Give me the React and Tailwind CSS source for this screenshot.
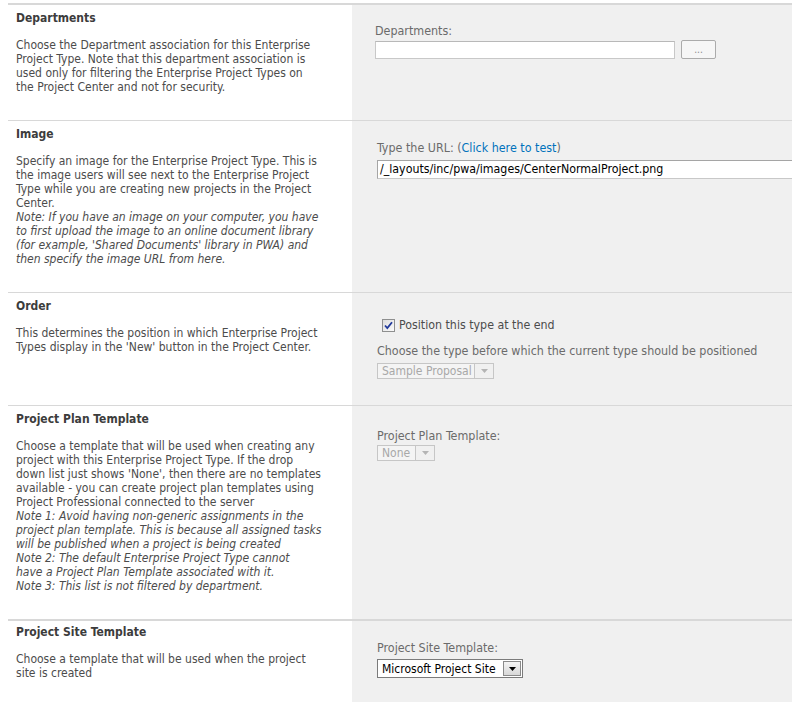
import React from 'react';

const font = { fontFamily: '"DejaVu Sans Condensed", "DejaVu Sans", Verdana, sans-serif' };

function Row({ title, lines, notes = [], controls, leftPad = 'pt-[6px]', rightPad = 'pt-[20px]', thick = false }) {
  return (
    <div className={`flex ${thick ? 'border-t-2' : 'border-t'} border-[#d8d8d8]`}>
      <div className={`w-[344px] shrink-0 pl-[8px] pb-[26px] ${leftPad}`}>
        <div className="text-[12px] leading-[14px] font-bold text-[#3c3c3c] font-stretch-condensed">{title}</div>
        <div className="mt-[13px] whitespace-nowrap text-[12px] leading-[14px] text-[#4c4c4c] font-stretch-condensed">
          {lines.map((l) => (
            <div key={l}>{l}</div>
          ))}
          {notes.map((l) => (
            <div key={l} className="italic">
              {l}
            </div>
          ))}
        </div>
      </div>
      <div className={`flex-1 bg-[#f0f0f0] pl-[25px] pb-[26px] ${rightPad}`}>{controls}</div>
    </div>
  );
}

function Label({ children }) {
  return <div className="text-[12.4px] leading-[14px] text-[#6b6b6b] font-stretch-condensed whitespace-nowrap">{children}</div>;
}

function DisabledSelect({ value, width }) {
  return (
    <div className={`flex h-[16px] border border-[#c6c6c6] bg-[#f4f4f4] ${width}`}>
      <span className="flex-1 pl-[4px] text-[12px] leading-[14px] text-[#a8a8a8] font-stretch-condensed whitespace-nowrap">{value}</span>
      <span className="flex w-[19px] items-center justify-center border-l border-[#c6c6c6] bg-[#f0f0f0]">
        <svg width="7" height="4" viewBox="0 0 7 4">
          <path d="M0 0h7L3.5 4z" fill="#b4b4b4" />
        </svg>
      </span>
    </div>
  );
}

export default function App() {
  return (
    <div className="h-[702px] w-[792px] overflow-hidden bg-white pt-[3px]" style={font}>
      <div className="ml-[8px] border-t border-[#d8d8d8]">
        <Row
          title="Departments"
          rightPad="pt-[19px] !pl-[23px]"
          lines={[
            'Choose the Department association for this Enterprise',
            'Project Type. Note that this department association is',
            'used only for filtering the Enterprise Project Types on',
            'the Project Center and not for security.',
          ]}
          controls={
            <>
              <Label>Departments:</Label>
              <div className="mt-[2px] flex items-center gap-[6px]">
                <div className="h-[18px] w-[300px] border border-[#c8c8c8] border-t-[#b8b8b8] bg-white" />
                <button className="h-[19px] w-[35px] rounded-[2px] border border-[#ababab] bg-[#f6f6f6] text-[10px] leading-[10px] text-[#8a8a8a]">
                  ...
                </button>
              </div>
            </>
          }
        />

        <Row
          title="Image"
          lines={[
            'Specify an image for the Enterprise Project Type. This is',
            'the image users will see next to the Enterprise Project',
            'Type while you are creating new projects in the Project',
            'Center.',
          ]}
          notes={[
            'Note: If you have an image on your computer, you have',
            'to first upload the image to an online document library',
            "(for example, 'Shared Documents' library in PWA) and",
            'then specify the image URL from here.',
          ]}
          controls={
            <>
              <Label>
                Type the URL: (<span className="text-[#0072bc]">Click here to test</span>)
              </Label>
              <div className="mt-[5px] h-[19px] w-[460px] border border-[#c8c8c8] border-t-[#a5a5a5] border-l-[#a5a5a5] bg-white pl-[2px] text-[12.3px] leading-[17px] text-black font-stretch-condensed whitespace-nowrap">
                /_layouts/inc/pwa/images/CenterNormalProject.png
              </div>
            </>
          }
        />

        <Row
          title="Order"
          rightPad="pt-[25px]"
          lines={[
            'This determines the position in which Enterprise Project',
            "Types display in the 'New' button in the Project Center.",
          ]}
          controls={
            <>
              <div className="flex items-center pl-[5px]">
                <span className="flex h-[13px] w-[13px] items-center justify-center border border-[#8e8f8f] bg-gradient-to-br from-[#dcdcdc] to-[#fbfbfb]">
                  <svg width="9" height="9" viewBox="0 0 9 9">
                    <path d="M1 4.5l2.3 2.5L8 1.2" fill="none" stroke="#21399a" strokeWidth="1.8" />
                  </svg>
                </span>
                <span className="ml-[4px] text-[12.3px] leading-[14px] text-[#4c4c4c] font-stretch-condensed whitespace-nowrap">
                  Position this type at the end
                </span>
              </div>
              <div className="mt-[12px]">
                <Label>Choose the type before which the current type should be positioned</Label>
              </div>
              <div className="mt-[5px]">
                <DisabledSelect value="Sample Proposal" width="w-[117px]" />
              </div>
            </>
          }
        />

        <Row
          title="Project Plan Template"
          rightPad="pt-[23px]"
          lines={[
            'Choose a template that will be used when creating any',
            'project with this Enterprise Project Type. If the drop',
            "down list just shows 'None', then there are no templates",
            'available - you can create project plan templates using',
            'Project Professional connected to the server',
          ]}
          notes={[
            'Note 1: Avoid having non-generic assignments in the',
            'project plan template. This is because all assigned tasks',
            'will be published when a project is being created',
            'Note 2: The default Enterprise Project Type cannot',
            'have a Project Plan Template associated with it.',
            'Note 3: This list is not filtered by department.',
          ]}
          controls={
            <>
              <Label>Project Plan Template:</Label>
              <div className="mt-[2px]">
                <DisabledSelect value="None" width="w-[58px]" />
              </div>
            </>
          }
        />

        <Row
          title="Project Site Template"
          thick
          leftPad="pt-[4px]"
          rightPad="pt-[20px]"
          lines={['Choose a template that will be used when the project', 'site is created']}
          controls={
            <>
              <Label>Project Site Template:</Label>
              <div className="mt-[4px] flex h-[19px] w-[146px] items-center border border-[#7b7b7b] bg-white pr-[1px]">
                <span className="flex-1 pl-[4px] text-[12px] leading-[14px] text-black font-stretch-condensed whitespace-nowrap">
                  Microsoft Project Site
                </span>
                <span className="flex h-[15px] w-[18px] items-center justify-center border border-[#8a8a8a] bg-gradient-to-b from-[#f4f4f4] to-[#d8d8d8]">
                  <svg width="7" height="4" viewBox="0 0 7 4">
                    <path d="M0 0h7L3.5 4z" fill="#000" />
                  </svg>
                </span>
              </div>
            </>
          }
        />
      </div>
    </div>
  );
}
